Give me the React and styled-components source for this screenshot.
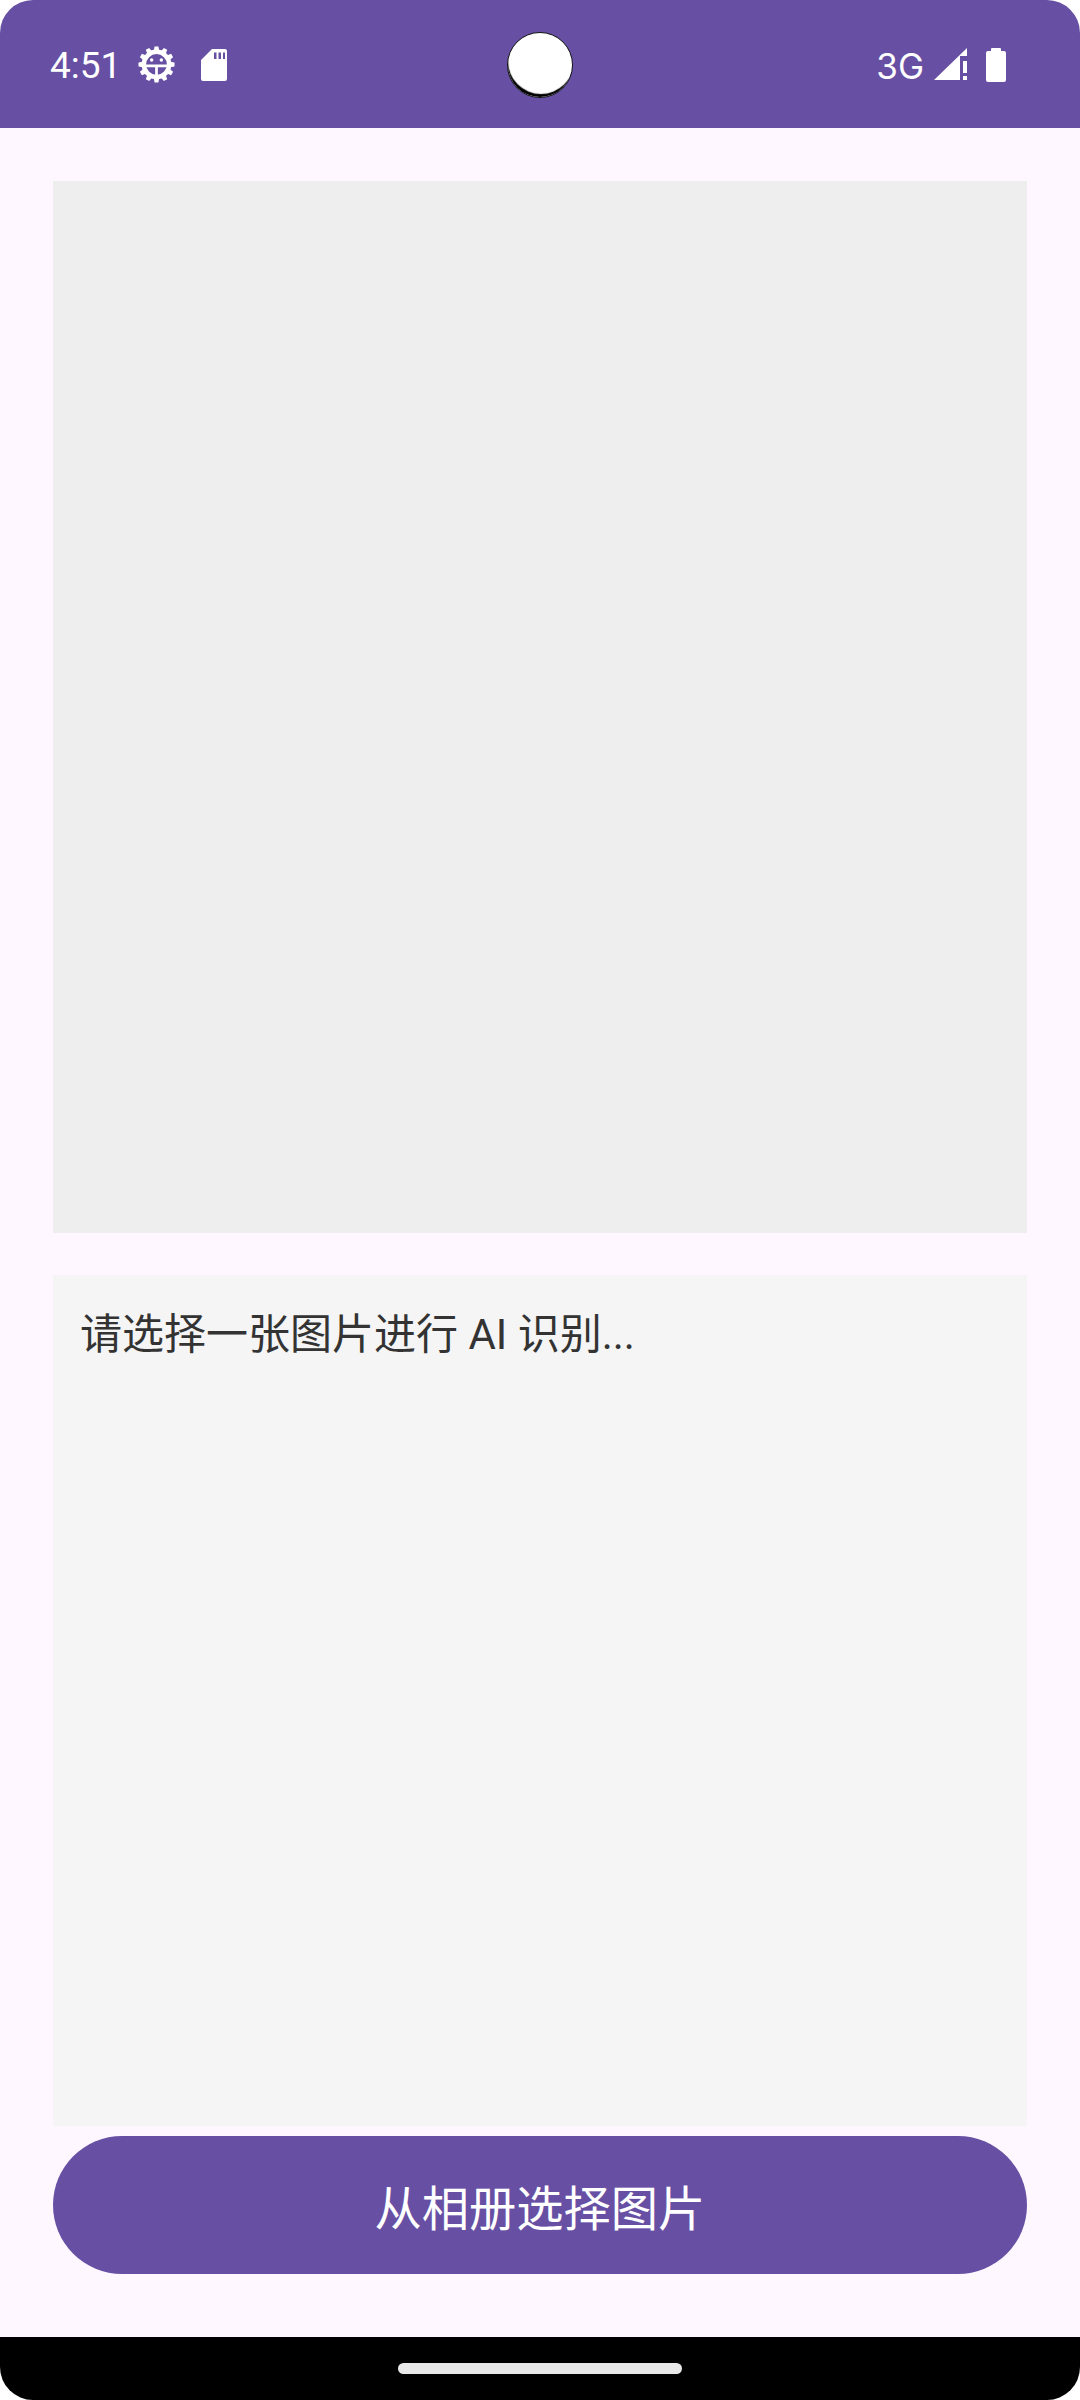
import React from 'react'
import styled, { createGlobalStyle } from 'styled-components'

const GlobalStyle = createGlobalStyle`
  html, body {
    margin: 0;
    padding: 0;
    background: #fff;
  }
  * {
    box-sizing: border-box;
  }
`

const GearIcon = () => (
  <svg width="37" height="37" viewBox="0 0 38 38">
    <g fill="#fff">
      {[...Array(12)].map((_, i) => (
        <path key={i} d="M16 6.5L17 0.5H21L22 6.5Z" transform={`rotate(${i * 30} 19 19)`} />
      ))}
    </g>
    <circle cx="19" cy="19" r="13" fill="none" stroke="#fff" strokeWidth="4.6" />
    <path d="M6 20.5h26M19 20.5v12" stroke="#fff" strokeWidth="2.8" fill="none" />
    <circle cx="14" cy="14.5" r="1.8" fill="#fff" />
    <circle cx="24" cy="14.5" r="1.8" fill="#fff" />
  </svg>
)

const SdIcon = () => (
  <svg width="26" height="32" viewBox="0 0 26 32">
    <path
      fill="#fff"
      fillRule="evenodd"
      d="M11 0H24a2 2 0 0 1 2 2V30a2 2 0 0 1-2 2H2a2 2 0 0 1-2-2V11ZM13 3.5V10H15.5V3.5ZM17.5 3.5V10H20V3.5ZM22 3.5V10H24V3.5Z"
    />
  </svg>
)

const SignalIcon = () => (
  <svg width="33" height="33" viewBox="0 0 33 33">
    <path fill="#fff" d="M33 0V8H26V32H0Z" />
    <path fill="#fff" d="M29 13H33V25H29ZM29 28H33V32H29Z" />
  </svg>
)

const BatteryIcon = () => (
  <svg width="20" height="34" viewBox="0 0 20 34">
    <path
      fill="#fff"
      d="M5 1A1 1 0 0 1 6 0H14A1 1 0 0 1 15 1V3H18A2 2 0 0 1 20 5V32A2 2 0 0 1 18 34H2A2 2 0 0 1 0 32V5A2 2 0 0 1 2 3H5Z"
    />
  </svg>
)

const App = () => {
  return (
    <>
      <GlobalStyle />
      <Screen>
        <StatusBar>
          <StatusGroup>
            <Clock>4:51</Clock>
            <GearSlot><GearIcon /></GearSlot>
            <SdSlot><SdIcon /></SdSlot>
          </StatusGroup>
          <Camera />
          <StatusGroup>
            <Network>3G</Network>
            <SignalSlot><SignalIcon /></SignalSlot>
            <BatterySlot><BatteryIcon /></BatterySlot>
          </StatusGroup>
        </StatusBar>
        <Content>
          <ImagePreview />
          <ResultBox>请选择一张图片进行 AI 识别...</ResultBox>
          <PickButton>从相册选择图片</PickButton>
        </Content>
        <NavBar>
          <HomeHandle />
        </NavBar>
      </Screen>
    </>
  )
}

const Screen = styled.div`
  position: relative;
  width: 1080px;
  height: 2400px;
  display: flex;
  flex-direction: column;
  overflow: hidden;
  border-radius: 33px;
  background: #fef7ff;
  font-family: Roboto, "Noto Sans CJK SC", sans-serif;
`

const StatusBar = styled.div`
  position: relative;
  height: 128px;
  flex-shrink: 0;
  display: flex;
  align-items: center;
  justify-content: space-between;
  padding: 1px 74px 0 50px;
  background: #6750a4;
  color: #fff;
`

const StatusGroup = styled.div`
  display: flex;
  align-items: center;
`

const Clock = styled.span`
  padding-top: 2px;
  font-size: 37px;
  line-height: 44px;
`

const Network = styled.span`
  padding-top: 2px;
  font-family: Inter, sans-serif;
  font-size: 35px;
  line-height: 44px;
`

const GearSlot = styled.div`
  display: flex;
  margin-left: 17px;
`

const SdSlot = styled.div`
  display: flex;
  margin-left: 26px;
`

const SignalSlot = styled.div`
  display: flex;
  margin-left: 10px;
`

const BatterySlot = styled.div`
  display: flex;
  margin-left: 19px;
`

const Camera = styled.div`
  position: absolute;
  left: 507px;
  top: 32px;
  width: 66px;
  height: 66px;
  border-radius: 50%;
  background: #fff;
  border: 1px solid #111;
  box-shadow: inset 1px -4px 1px -1px #000;
`

const Content = styled.main`
  flex: 1;
  display: flex;
  flex-direction: column;
  padding: 53px 53px 63px;
`

const ImagePreview = styled.div`
  height: 1052px;
  flex-shrink: 0;
  background: #eeeeee;
`

const ResultBox = styled.div`
  flex: 1;
  margin-top: 42px;
  padding: 28px 28px 28px 27px;
  background: #f5f5f5;
  color: #333333;
  font-size: 42px;
  line-height: 64px;
`

const PickButton = styled.button`
  height: 138px;
  flex-shrink: 0;
  margin-top: 10px;
  border: 0;
  border-radius: 69px;
  background: #6750a4;
  color: #fff;
  font-family: inherit;
  font-size: 47.25px;
`

const NavBar = styled.div`
  height: 63px;
  flex-shrink: 0;
  display: flex;
  justify-content: center;
  padding-top: 26px;
  background: #000;
`

const HomeHandle = styled.div`
  width: 284px;
  height: 11px;
  border-radius: 6px;
  background: #e8e8e8;
`

export default App
